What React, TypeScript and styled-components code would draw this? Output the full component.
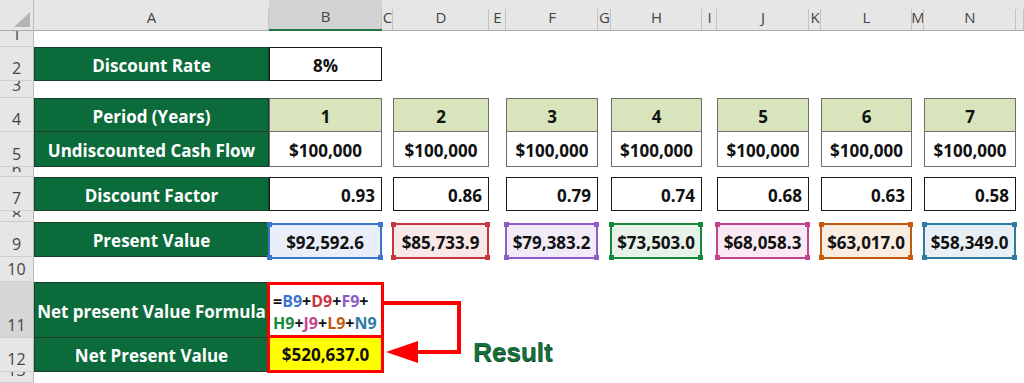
import React from "react";
import styled, { createGlobalStyle, css } from "styled-components";

const GlobalStyle = createGlobalStyle`
  html, body {
    margin: 0;
    padding: 0;
    background: #ffffff;
    overflow: hidden;
  }
  body {
    font-family: "Open Sans", "Liberation Sans", sans-serif;
  }
`;

// column letters with their widths (row header comes first)
const columns: { name: string; width: string }[] = [
  { name: "A", width: "235px" },
  { name: "B", width: "113px" },
  { name: "C", width: "11px" },
  { name: "D", width: "96px" },
  { name: "E", width: "17px" },
  { name: "F", width: "92px" },
  { name: "G", width: "13px" },
  { name: "H", width: "91px" },
  { name: "I", width: "15px" },
  { name: "J", width: "92px" },
  { name: "K", width: "12px" },
  { name: "L", width: "91px" },
  { name: "M", width: "12px" },
  { name: "N", width: "92px" },
  { name: "O", width: "1fr" },
];

const rowHeights = [16, 34, 17, 34, 35, 10, 34, 11, 35, 25, 56, 34];

type Tone = { line: string; fill: string };

const tones: Record<string, Tone> = {
  blue: { line: "#3b74cc", fill: "#e9eef8" },
  red: { line: "#c8363f", fill: "#f9e8e8" },
  purple: { line: "#8d5cc6", fill: "#f1ebf8" },
  green: { line: "#16893a", fill: "#e7f3e9" },
  pink: { line: "#c2448f", fill: "#f8e9f2" },
  orange: { line: "#c45a0e", fill: "#f9ede2" },
  teal: { line: "#2d7ba1", fill: "#e8f0f5" },
};

const periods = [
  { col: "B", year: "1", df: "0.93", pv: "$92,592.6", tone: tones.blue },
  { col: "D", year: "2", df: "0.86", pv: "$85,733.9", tone: tones.red },
  { col: "F", year: "3", df: "0.79", pv: "$79,383.2", tone: tones.purple },
  { col: "H", year: "4", df: "0.74", pv: "$73,503.0", tone: tones.green },
  { col: "J", year: "5", df: "0.68", pv: "$68,058.3", tone: tones.pink },
  { col: "L", year: "6", df: "0.63", pv: "$63,017.0", tone: tones.orange },
  { col: "N", year: "7", df: "0.58", pv: "$58,349.0", tone: tones.teal },
];

const formulaRefs = [
  [
    { ref: "B9", color: tones.blue.line },
    { ref: "D9", color: tones.red.line },
    { ref: "F9", color: tones.purple.line },
  ],
  [
    { ref: "H9", color: tones.green.line },
    { ref: "J9", color: tones.pink.line },
    { ref: "L9", color: tones.orange.line },
    { ref: "N9", color: tones.teal.line },
  ],
];

const colIndex = (name: string) =>
  columns.findIndex((c) => c.name === name) + 2;

const App = () => {
  return (
    <>
      <GlobalStyle />
      <Sheet>
        <Corner $row={1} $col={1}>
          <SelectAll />
        </Corner>
        {columns.map((c, i) => (
          <ColHeader key={c.name} $row={1} $col={i + 2} $active={c.name === "B"}>
            {/* the last column is cut off by the window, its letter is not visible */}
            {c.name === "O" ? "" : c.name}
          </ColHeader>
        ))}
        {rowHeights.map((h, i) => (
          <RowHeader key={i} $row={i + 2} $col={1} $active={i + 1 === 11}>
            <RowNumber $tiny={h < 14}>{i + 1}</RowNumber>
          </RowHeader>
        ))}
        <RowHeader $row={14} $col={1}>
          <RowNumber>13</RowNumber>
        </RowHeader>

        <Label $row={3} $col={2}>Discount Rate</Label>
        <Value $row={3} $col={3} $kind="plain">8%</Value>

        <Label $row={5} $col={2}>Period (Years)</Label>
        <Label $row={6} $col={2} $joined>
          Undiscounted Cash Flow
        </Label>
        <Label $row={8} $col={2}>Discount Factor</Label>
        <Label $row={10} $col={2}>Present Value</Label>

        {periods.map((p) => {
          const col = colIndex(p.col);
          return (
            <React.Fragment key={p.col}>
              <Value $row={5} $col={col} $kind="period">
                {p.year}
              </Value>
              <Value $row={6} $col={col} $kind="cash" $joined>
                $100,000
              </Value>
              <Value $row={8} $col={col} $kind="factor">
                {p.df}
              </Value>
              <PvCell $row={10} $col={col} $tone={p.tone}>
                {p.pv}
                <Handle $tone={p.tone} $v="top" $h="left" />
                <Handle $tone={p.tone} $v="top" $h="right" />
                <Handle $tone={p.tone} $v="bottom" $h="left" />
                <Handle $tone={p.tone} $v="bottom" $h="right" />
              </PvCell>
            </React.Fragment>
          );
        })}

        <Label $row={12} $col={2}>Net present Value Formula</Label>
        <Label $row={13} $col={2} $joined>
          Net Present Value
        </Label>

        <FormulaCell $row={12} $col={3}>
          {formulaRefs.map((line, li) => (
            <FormulaLine key={li}>
              {li === 0 && "="}
              {line.map((r, ri) => (
                <React.Fragment key={r.ref}>
                  {ri > 0 && "+"}
                  <Ref $color={r.color}>{r.ref}</Ref>
                </React.Fragment>
              ))}
              {li === 0 && "+"}
            </FormulaLine>
          ))}
        </FormulaCell>
        <ResultCell $row={13} $col={3}>$520,637.0</ResultCell>

        <Callout width="1024" height="383" viewBox="0 0 1024 383">
          <path
            d="M384 303 H459 V352 H414"
            fill="none"
            stroke="#ff0000"
            strokeWidth="4"
          />
          <polygon points="386,352 418,341 418,363" fill="#ff0000" />
        </Callout>
        <ResultLabel>Result</ResultLabel>
      </Sheet>
    </>
  );
};

export default App;

type Place = { $row: number; $col: number };

const placed = css<Place>`
  grid-row: ${(p) => p.$row};
  grid-column: ${(p) => p.$col};
  min-width: 0;
  min-height: 0;
`;

const Sheet = styled.div`
  position: relative;
  width: 1024px;
  height: 383px;
  overflow: hidden;
  display: grid;
  grid-template-columns: 34px ${columns.map((c) => c.width).join(" ")};
  grid-template-rows: 31px ${rowHeights.map((h) => `${h}px`).join(" ")} 1fr;
  background: #ffffff;
`;

const Corner = styled.div<Place>`
  ${placed};
  background: #e6e6e6;
  border-right: 1px solid #b8b8b8;
  border-bottom: 1px solid #ababab;
  position: relative;
`;

const SelectAll = styled.div`
  position: absolute;
  right: 3px;
  bottom: 3px;
  width: 16px;
  height: 15px;
  background: #b4b4b4;
  clip-path: polygon(100% 0, 100% 100%, 0 100%);
`;

const ColHeader = styled.div<Place & { $active?: boolean }>`
  ${placed};
  position: relative;
  display: flex;
  align-items: flex-end;
  justify-content: center;
  padding-bottom: 4px;
  box-sizing: border-box;
  font-size: 15px;
  line-height: 18px;
  color: #444444;
  overflow: hidden;
  background: ${(p) => (p.$active ? "#d3d3d3" : "#e6e6e6")};
  border-bottom: ${(p) => (p.$active ? "2px solid #217346" : "1px solid #ababab")};

  &::after {
    content: "";
    position: absolute;
    right: 0;
    top: 9px;
    bottom: 0;
    width: 1px;
    background: #c3c3c3;
  }
`;

const RowHeader = styled.div<Place & { $active?: boolean }>`
  ${placed};
  display: flex;
  align-items: flex-end;
  justify-content: center;
  padding-bottom: 4px;
  box-sizing: border-box;
  overflow: hidden;
  color: #444444;
  background: ${(p) => (p.$active ? "#d6d6d6" : "#e6e6e6")};
  border-right: 1px solid #b8b8b8;
  border-bottom: 1px solid #cfcfcf;
`;

const RowNumber = styled.span<{ $tiny?: boolean }>`
  display: block;
  font-size: 16px;
  line-height: ${(p) => (p.$tiny ? "6px" : "16px")};
  height: ${(p) => (p.$tiny ? "6px" : "auto")};
  overflow: hidden;
`;

const cellText = css`
  display: flex;
  align-items: center;
  box-sizing: border-box;
  padding-top: 2px;
  font-size: 17px;
  font-weight: 700;
  white-space: nowrap;
  overflow: hidden;
`;

const Label = styled.div<Place & { $joined?: boolean }>`
  ${placed};
  ${cellText};
  justify-content: center;
  background: #0b6b3a;
  color: #ffffff;
  border: 1px solid #1d3d2a;
  border-top: ${(p) => (p.$joined ? "none" : "1px solid #1d3d2a")};
`;

type Kind = "plain" | "period" | "cash" | "factor";

const Value = styled.div<Place & { $kind: Kind; $joined?: boolean }>`
  ${placed};
  ${cellText};
  color: #111111;
  justify-content: ${(p) => (p.$kind === "factor" ? "flex-end" : "center")};
  padding-right: ${(p) => (p.$kind === "factor" ? "6px" : "0")};
  background: ${(p) => (p.$kind === "period" ? "#d8e4bc" : "#ffffff")};
  border: 1px solid
    ${(p) => (p.$kind === "plain" || p.$kind === "factor" ? "#1a1a1a" : "#6f6f6f")};
  border-top: ${(p) => (p.$joined ? "none" : undefined)};
`;

const PvCell = styled.div<Place & { $tone: Tone }>`
  ${placed};
  ${cellText};
  position: relative;
  overflow: visible;
  justify-content: center;
  color: #111111;
  margin: 1px 0 -2px -1px;
  background: ${(p) => p.$tone.fill};
  border: 2px solid ${(p) => p.$tone.line};
`;

const Handle = styled.span<{ $tone: Tone; $v: "top" | "bottom"; $h: "left" | "right" }>`
  position: absolute;
  width: 5px;
  height: 5px;
  background: ${(p) => p.$tone.line};
  ${(p) => p.$v}: -3px;
  ${(p) => p.$h}: -3px;
`;

const FormulaCell = styled.div<Place>`
  ${placed};
  display: flex;
  flex-direction: column;
  justify-content: center;
  gap: 1px;
  box-sizing: border-box;
  margin: 0 -2px 0 -2px;
  padding: 5px 0 0 3px;
  background: #ffffff;
  border: 3px solid #ff0000;
  font-size: 16px;
  font-weight: 700;
  color: #111111;
  white-space: nowrap;
`;

const FormulaLine = styled.div`
  line-height: 21px;
`;

const Ref = styled.span<{ $color: string }>`
  color: ${(p) => p.$color};
`;

const ResultCell = styled.div<Place>`
  ${placed};
  ${cellText};
  justify-content: center;
  margin: 0 -2px 0 -2px;
  background: #ffff00;
  color: #111111;
  border: 3px solid #ff0000;
  border-top: none;
  padding-top: 0;
  margin-bottom: -1px;
`;

const Callout = styled.svg`
  position: absolute;
  left: 0;
  top: 0;
  pointer-events: none;
`;

const ResultLabel = styled.div`
  position: absolute;
  left: 473px;
  top: 339px;
  font-family: "Liberation Sans", Arial, sans-serif;
  font-size: 26px;
  line-height: 1;
  font-weight: 700;
  color: #17703a;
  text-shadow: 0.5px 0.5px 0 #0b4322;
`;
